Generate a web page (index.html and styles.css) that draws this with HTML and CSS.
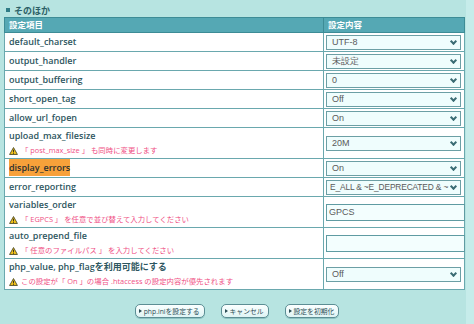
FILE: index.html
```html
<!DOCTYPE html>
<html lang="ja">
<head>
<meta charset="utf-8">
<link rel="stylesheet" href="styles.css">
</head>
<body>
<div class="panel">
  <div class="title"><span class="sq"></span>そのほか</div>
  <table class="grid">
    <colgroup><col class="k1"><col class="k2"></colgroup>
    <thead>
      <tr><th>設定項目</th><th>設定内容</th></tr>
    </thead>
    <tbody>
      <tr><td class="lbl">default_charset</td><td class="val"><div class="sel">UTF-8<span class="chev"></span></div></td></tr>
      <tr><td class="lbl">output_handler</td><td class="val"><div class="sel">未設定<span class="chev"></span></div></td></tr>
      <tr><td class="lbl">output_buffering</td><td class="val"><div class="sel">0<span class="chev"></span></div></td></tr>
      <tr><td class="lbl">short_open_tag</td><td class="val"><div class="sel">Off<span class="chev"></span></div></td></tr>
      <tr><td class="lbl">allow_url_fopen</td><td class="val"><div class="sel">On<span class="chev"></span></div></td></tr>
      <tr class="dbl"><td class="lbl">upload_max_filesize<div class="warn"><svg class="ico" viewBox="0 0 10 9"><path d="M5 0.6 L9.4 8.4 L0.6 8.4 Z" fill="#f2c21b" stroke="#3a3a1a" stroke-width="0.9" stroke-linejoin="round"/><rect x="4.5" y="3" width="1" height="3" fill="#222"/><rect x="4.5" y="6.6" width="1" height="1" fill="#222"/></svg>「 post_max_size 」 も同時に変更します</div></td><td class="val"><div class="sel">20M<span class="chev"></span></div></td></tr>
      <tr><td class="lbl"><span class="hl">display_errors</span></td><td class="val"><div class="sel">On<span class="chev"></span></div></td></tr>
      <tr><td class="lbl">error_reporting</td><td class="val"><div class="sel tight">E_ALL &amp; ~E_DEPRECATED &amp; ~<span class="chev"></span></div></td></tr>
      <tr class="dbl"><td class="lbl">variables_order<div class="warn"><svg class="ico" viewBox="0 0 10 9"><path d="M5 0.6 L9.4 8.4 L0.6 8.4 Z" fill="#f2c21b" stroke="#3a3a1a" stroke-width="0.9" stroke-linejoin="round"/><rect x="4.5" y="3" width="1" height="3" fill="#222"/><rect x="4.5" y="6.6" width="1" height="1" fill="#222"/></svg>「 EGPCS 」 を任意で並び替えて入力してください</div></td><td class="val"><div class="inp">GPCS</div></td></tr>
      <tr class="dbl"><td class="lbl">auto_prepend_file<div class="warn"><svg class="ico" viewBox="0 0 10 9"><path d="M5 0.6 L9.4 8.4 L0.6 8.4 Z" fill="#f2c21b" stroke="#3a3a1a" stroke-width="0.9" stroke-linejoin="round"/><rect x="4.5" y="3" width="1" height="3" fill="#222"/><rect x="4.5" y="6.6" width="1" height="1" fill="#222"/></svg>「 任意のファイルパス 」 を入力してください</div></td><td class="val"><div class="inp"></div></td></tr>
      <tr class="dbl"><td class="lbl">php_value, php_flagを利用可能にする<div class="warn"><svg class="ico" viewBox="0 0 10 9"><path d="M5 0.6 L9.4 8.4 L0.6 8.4 Z" fill="#f2c21b" stroke="#3a3a1a" stroke-width="0.9" stroke-linejoin="round"/><rect x="4.5" y="3" width="1" height="3" fill="#222"/><rect x="4.5" y="6.6" width="1" height="1" fill="#222"/></svg>この設定が「 On 」の場合 .htaccess の設定内容が優先されます</div></td><td class="val"><div class="sel">Off<span class="chev"></span></div></td></tr>
    </tbody>
  </table>
  <div class="btns">
    <span class="btn"><span class="tri"></span>php.iniを設定する</span>
    <span class="btn"><span class="tri"></span>キャンセル</span>
    <span class="btn"><span class="tri"></span>設定を初期化</span>
  </div>
</div>
</body>
</html>
```

FILE: styles.css
```css
html, body {
  margin: 0;
  padding: 0;
  background: #c6ecea;
  height: 100%;
}
body {
  font-family: "Open Sans", "Noto Sans CJK JP", sans-serif;
  color: #2e5560;
}
.panel {
  width: 466px;
  height: 324px;
  background: #b7e4e1;
  padding: 3px 0 0 4px;
  box-sizing: border-box;
}
.title {
  display: flex;
  align-items: center;
  gap: 4px;
  height: 14px;
  font-size: 9px;
  font-weight: 700;
  color: #2b5f66;
  padding-left: 2px;
}
.sq {
  width: 4px;
  height: 4px;
  background: #2f7c86;
}
.grid {
  width: 460px;
  table-layout: fixed;
  border-collapse: collapse;
  background: #fff;
  border: 1px solid #3d8c96;
}
.k1 { width: 319px; }
.k2 { width: 141px; }
.grid th {
  background: #55a8b4;
  color: #fff;
  font-size: 8.5px;
  font-weight: 700;
  text-align: left;
  height: 14px;
  padding: 0 0 0 4px;
  border: 1px solid #3d8c96;
  line-height: 14px;
}
.grid td {
  border: 1px solid #6aa8ae;
  height: 18px;
  padding: 0;
  vertical-align: middle;
}
.grid tr.dbl td { height: 30px; }
.lbl {
  font-size: 9px;
  font-weight: 600;
  padding-left: 4px !important;
  color: #2d5660;
  line-height: 12px;
}
.hl {
  background: #f7a13a;
  color: #2a3030;
  padding: 2px 0;
}
.warn {
  display: flex;
  align-items: center;
  gap: 3px;
  font-size: 7.4px;
  font-weight: 400;
  color: #ef4f84;
  line-height: 11px;
  margin-top: 3px;
}
.ico {
  width: 9px;
  height: 8px;
  flex: none;
}
.val {
  padding: 0 4px 0 2px !important;
}
.sel, .inp {
  height: 13px;
  border: 1px solid #6c9fa5;
  background: #effdfd;
  font-family: "Liberation Sans", Arial, sans-serif;
  font-size: 9px;
  color: #5a5a5a;
  display: flex;
  align-items: center;
  padding-left: 5px;
  position: relative;
  overflow: hidden;
  white-space: nowrap;
}
.sel {
  width: 128px;
}
.sel.tight {
  padding-left: 3px;
  width: 130px;
  font-size: 8.4px;
  letter-spacing: -0.15px;
}
.inp {
  height: 15px;
  width: 135px;
  padding-left: 2px;
  background: #f3fefe;
  border-color: #5f9ba2;
}
.chev {
  position: absolute;
  right: 4px;
  top: 3px;
  width: 3px;
  height: 3px;
  border-right: 2px solid #3b6c74;
  border-bottom: 2px solid #3b6c74;
  transform: rotate(45deg);
  background: #effdfd;
}
.btns {
  display: flex;
  justify-content: center;
  gap: 16px;
  margin-top: 14px;
  width: 466px;
}
.btn {
  display: inline-flex;
  align-items: center;
  gap: 2px;
  height: 12px;
  padding: 0 4px 0 3px;
  border: 1px solid #5c8e94;
  border-radius: 5px;
  background: linear-gradient(#fbffff, #dff4f4);
  font-size: 6.8px;
  color: #2c4e56;
  box-shadow: 0 1px 0 #8fc3c3;
}
.tri {
  width: 0;
  height: 0;
  border-left: 3px solid #2c4e56;
  border-top: 2px solid transparent;
  border-bottom: 2px solid transparent;
}
```
